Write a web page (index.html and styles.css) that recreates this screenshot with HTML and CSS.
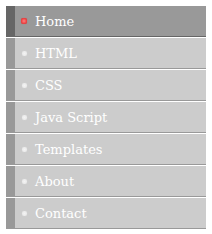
FILE: index.html
```html
<!DOCTYPE html>
<html>
<head>
<meta charset="utf-8">
<link rel="stylesheet" href="styles.css">
</head>
<body>
<ul class="menu">
  <li class="item active"><span class="dot"></span><span class="label">Home</span></li>
  <li class="item"><span class="dot"></span><span class="label">HTML</span></li>
  <li class="item"><span class="dot"></span><span class="label">CSS</span></li>
  <li class="item"><span class="dot"></span><span class="label">Java Script</span></li>
  <li class="item"><span class="dot"></span><span class="label">Templates</span></li>
  <li class="item"><span class="dot"></span><span class="label">About</span></li>
  <li class="item"><span class="dot"></span><span class="label">Contact</span></li>
</ul>
</body>
</html>
```
FILE: styles.css
```css
html, body {
  margin: 0;
  padding: 0;
  background: #ffffff;
}
.menu {
  list-style: none;
  margin: 6px 0 0 6px;
  padding: 0;
  width: 200px;
  font-family: "DejaVu Serif", serif;
}
.item {
  display: flex;
  align-items: center;
  height: 30px;
  background: #cccccc;
  border-left: 9px solid #999999;
  border-bottom: 1px solid #999999;
  margin-bottom: 1px;
  box-sizing: content-box;
}
.item.active {
  background: #999999;
  border-left-color: #666666;
  border-bottom-color: #666666;
}
.dot {
  width: 5px;
  height: 5px;
  margin-left: 7px;
  background: radial-gradient(circle, #f4f4f4 0%, #e4e4e4 100%);
  border-radius: 2px;
  box-shadow: 0 0 1px #dddddd;
}
.active .dot {
  width: 6px;
  height: 6px;
  margin-left: 6px;
  background: radial-gradient(circle, #ff8080 0%, #e83838 70%, #c02828 100%);
  border-radius: 2px;
  box-shadow: 0 0 1px #d05050;
}
.label {
  margin-left: 8px;
  color: #ffffff;
  font-size: 13px;
  line-height: 1;
}
.active .label {
  margin-left: 8px;
}
```
